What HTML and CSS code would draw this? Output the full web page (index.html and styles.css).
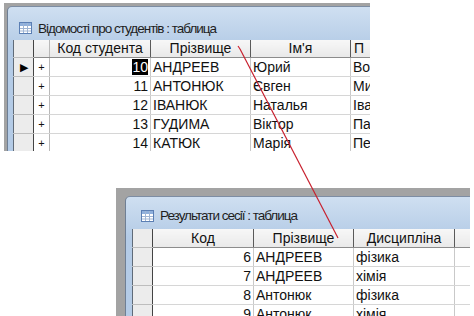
FILE: index.html
```html
<!DOCTYPE html>
<html lang="uk">
<head>
  <meta charset="UTF-8">
  <title>Відомості про студентів</title>
  <link rel="stylesheet" href="styles.css">
</head>
<body>
  <div class="desk">
    <div class="win win-top">
      <div class="frame">
        <div class="title">
          <svg class="ico" width="13" height="12" viewBox="0 0 13 12">
            <rect x="0.5" y="0.5" width="12" height="11" fill="#fff" stroke="#5b7fb4"/>
            <rect x="1" y="1" width="11" height="3" fill="#8fb0dc"/>
            <path d="M1 6.5h11M1 9h11M4.5 1v10M8.5 1v10" stroke="#9fb5d4" stroke-width="1"/>
          </svg>
          Відомості про студентів : таблица
        </div>
        <table class="grid grid-top">
          <colgroup>
            <col class="c-sel"><col class="c-exp"><col class="c-101"><col class="c-100"><col class="c-100"><col class="c-100">
          </colgroup>
          <tr class="head">
            <td class="sel"></td><td class="exp"></td>
            <td>Код студента</td><td>Прізвище</td><td>Ім'я</td><td class="left">П</td>
          </tr>
          <tr><td class="sel cur">&#9654;</td><td class="exp">+</td><td class="num"><span class="hl">10</span></td><td>АНДРЕЕВ</td><td>Юрий</td><td>Во</td></tr>
          <tr><td class="sel"></td><td class="exp">+</td><td class="num">11</td><td>АНТОНЮК</td><td>Євген</td><td>Ми</td></tr>
          <tr><td class="sel"></td><td class="exp">+</td><td class="num">12</td><td>ІВАНЮК</td><td>Наталья</td><td>Іва</td></tr>
          <tr><td class="sel"></td><td class="exp">+</td><td class="num">13</td><td>ГУДИМА</td><td>Віктор</td><td>Па</td></tr>
          <tr><td class="sel"></td><td class="exp">+</td><td class="num">14</td><td>КАТЮК</td><td>Марія</td><td>Пе</td></tr>
        </table>
      </div>
    </div>

    <div class="win win-bottom">
      <div class="frame">
        <div class="title">
          <svg class="ico" width="13" height="12" viewBox="0 0 13 12">
            <rect x="0.5" y="0.5" width="12" height="11" fill="#fff" stroke="#5b7fb4"/>
            <rect x="1" y="1" width="11" height="3" fill="#8fb0dc"/>
            <path d="M1 6.5h11M1 9h11M4.5 1v10M8.5 1v10" stroke="#9fb5d4" stroke-width="1"/>
          </svg>
          Результати сесії : таблица
        </div>
        <table class="grid grid-bottom">
          <colgroup>
            <col class="c-sel"><col class="c-101"><col class="c-100"><col class="c-101"><col class="c-rest">
          </colgroup>
          <tr class="head">
            <td class="sel"></td>
            <td>Код</td><td>Прізвище</td><td>Дисципліна</td><td class="rest"></td>
          </tr>
          <tr><td class="sel"></td><td class="num">6</td><td>АНДРЕЕВ</td><td>фізика</td><td class="rest"></td></tr>
          <tr><td class="sel"></td><td class="num">7</td><td>АНДРЕЕВ</td><td>хімія</td><td class="rest"></td></tr>
          <tr><td class="sel"></td><td class="num">8</td><td>Антонюк</td><td>фізика</td><td class="rest"></td></tr>
          <tr><td class="sel"></td><td class="num">9</td><td>Антонюк</td><td>хімія</td><td class="rest"></td></tr>
        </table>
      </div>
    </div>

    <svg class="link" width="474" height="316" viewBox="0 0 474 316">
      <path d="M238 46l2 3" stroke="#d02030" stroke-width="1.2"/>
      <line x1="240" y1="49" x2="338" y2="238" stroke="#c8202e" stroke-width="1.2"/>
    </svg>
  </div>
</body>
</html>
```

FILE: styles.css
```css
body {
  margin: 0;
  background: #fff;
  font-family: "Liberation Sans", Arial, sans-serif;
  font-size: 14px;
  color: #111;
}
.desk {
  position: relative;
  width: 474px;
  height: 316px;
  overflow: hidden;
}
.win {
  position: absolute;
  background: #a3a3a3;
  overflow: hidden;
}
.win-top {
  left: 4px;
  top: 3px;
  width: 366px;
  height: 148px;
  padding: 3px 0 0 3px;
  box-sizing: border-box;
}
.win-bottom {
  left: 116px;
  top: 188px;
  width: 354px;
  height: 128px;
  padding: 8px 0 0 9px;
  box-sizing: border-box;
}
.frame {
  height: 100%;
  background: linear-gradient(#cfdff1, #b4cbe6 40px);
  border-left: 1px solid #6f7f94;
  border-top: 1px solid #7d8da3;
  border-radius: 5px 0 0 0;
  padding-left: 5px;
  overflow: hidden;
}
.win-bottom .frame {
  padding-left: 6px;
}
.title {
  height: 33px;
  box-sizing: border-box;
  padding: 9px 0 0 6px;
  display: flex;
  align-items: center;
  gap: 6px;
  font-family: "Liberation Sans", Arial, sans-serif;
  font-size: 13.5px;
  letter-spacing: -1px;
  color: #1e1e1e;
}
.win-bottom .title {
  height: 32px;
  padding: 5px 0 0 9px;
}
.ico {
  flex: none;
}
.grid {
  border-collapse: collapse;
  table-layout: fixed;
  background: #fff;
  border-left: 1px solid #606b78;
}
.grid-top { width: 437px; }
.grid-bottom { width: 352px; }
.c-sel { width: 20px; }
.c-exp { width: 16px; }
.c-101 { width: 101px; }
.c-100 { width: 100px; }
.c-rest { width: 30px; }
.grid td {
  height: 18px;
  padding: 0 2px;
  border-right: 1px solid #c9c9c9;
  border-bottom: 1px solid #d6d6d6;
  white-space: nowrap;
  overflow: hidden;
  line-height: 18px;
}
.grid .head td {
  height: 17px;
  line-height: 17px;
  background: linear-gradient(#f7f7f7, #e9e9e9);
  border-right: 1px solid #5a5a5a;
  border-bottom: 1px solid #8c8c8c;
  text-align: center;
}
.grid .head td.left {
  text-align: left;
  padding-left: 3px;
}
.grid-bottom .head td {
  height: 18px;
  line-height: 18px;
}
.grid td.sel {
  background: #ececec;
  border-right: 1px solid #444;
  border-bottom: 1px solid #bdbdbd;
  font-size: 11px;
  text-align: center;
  padding: 0;
}
.grid td.cur {
  color: #000;
}
.grid td.exp {
  font-size: 11px;
  text-align: center;
  padding: 0;
  border-right: 1px solid #b8b8b8;
}
.grid td.num {
  text-align: right;
}
.hl {
  background: #000;
  color: #fff;
}
.grid td.rest {
  border-right: none;
}
.link {
  position: absolute;
  left: 0;
  top: 0;
  pointer-events: none;
}
```
